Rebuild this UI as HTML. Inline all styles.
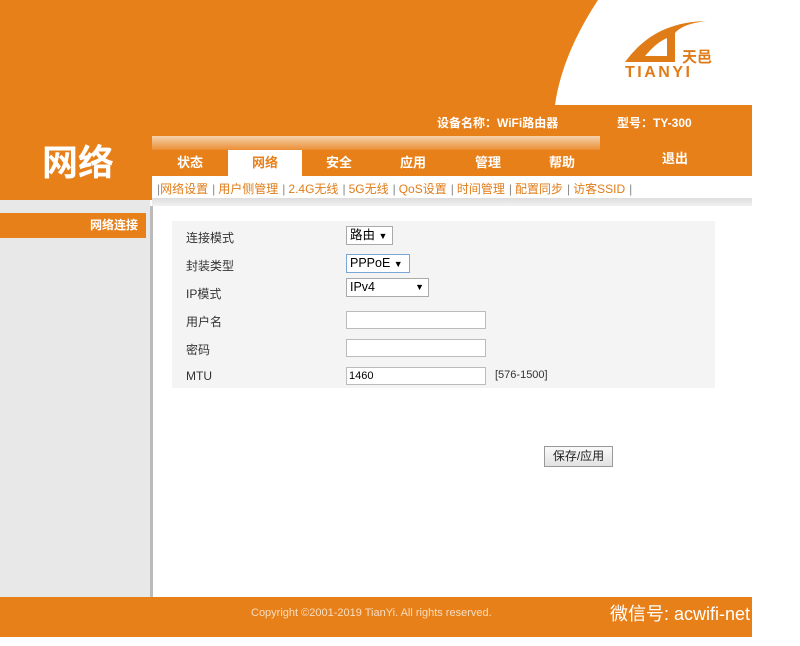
<!DOCTYPE html>
<html><head><meta charset="utf-8"><style>
body{margin:0;width:800px;height:646px;background:#fff;position:relative;overflow:hidden;font-family:"Liberation Sans","Noto Sans CJK SC",sans-serif;}
.a{position:absolute;}
.or{background:#e8801a;}
.w{color:#fff;}
.lbl{position:absolute;left:186px;font-size:12px;color:#333;}
.inp{position:absolute;left:346px;width:136px;height:16px;border:1px solid #bbb;background:#fff;font-size:11px;line-height:16px;padding-left:2px;box-sizing:content-box;}
.sel{position:absolute;left:346px;border:1px solid #aaa;background:#fff;font-size:12.5px;height:17px;line-height:17px;padding-left:3px;}
.tab{position:absolute;top:150px;width:74px;height:26px;line-height:26px;text-align:center;color:#fff;font-size:13px;font-weight:bold;}
.s{color:#888;margin:0 3px 0 4px;}
</style></head><body>
<svg class="a" style="left:0;top:0" width="800" height="110">
<path d="M0 0 H598 C575 35 560 70 555 105 H0 Z" fill="#e8801a"/>
<path d="M625 62 C645 35 670 22 706 21 C690 23 680 27 675 33 V62 Z" fill="#e07c18"/>
<path d="M645 56 C652 48 658 42 667 38 V56 Z" fill="#fff"/>
<circle cx="588" cy="612" r="6" fill="#fff"/><circle cx="596" cy="616" r="5" fill="#fff"/>
</svg>
<div class="a" style="left:682px;top:46px;font-size:15px;color:#e07c18;font-weight:bold;">天邑</div>
<div class="a" style="left:625px;top:64px;font-size:16px;color:#e07c18;font-weight:bold;letter-spacing:2.5px;">TIANYI</div>
<div class="a or" style="left:0;top:105px;width:752px;height:71px;"></div>
<div class="a or" style="left:0;top:176px;width:152px;height:24px;"></div>
<div class="a w" style="left:42px;top:134px;font-size:36px;font-weight:bold;">网络</div>
<div class="a w" style="left:437px;top:114px;font-size:12px;font-weight:bold;">设备名称：WiFi路由器</div>
<div class="a w" style="left:617px;top:114px;font-size:12px;font-weight:bold;">型号：TY-300</div>
<div class="a" style="left:152px;top:136px;width:448px;height:14px;background:linear-gradient(#f5d2ad,#eb8e33);"></div>
<div class="tab" style="left:153px">状态</div>
<div class="tab" style="left:228px;background:#fff;color:#e8801a;">网络</div>
<div class="tab" style="left:302px">安全</div>
<div class="tab" style="left:376px">应用</div>
<div class="tab" style="left:451px">管理</div>
<div class="tab" style="left:525px">帮助</div>
<div class="a w" style="left:662px;top:148px;font-size:13px;font-weight:bold;">退出</div>
<div class="a" style="left:157px;top:180px;font-size:12px;color:#e07c18;white-space:nowrap;"><span style="color:#888">|</span>网络设置<span class="s">|</span>用户侧管理<span class="s">|</span>2.4G无线<span class="s">|</span>5G无线<span class="s">|</span>QoS设置<span class="s">|</span>时间管理<span class="s">|</span>配置同步<span class="s">|</span>访客SSID<span class="s">|</span></div>
<div class="a" style="left:152px;top:198px;width:600px;height:8px;background:linear-gradient(#ddd,#f2f2f2);"></div>
<div class="a" style="left:0;top:200px;width:150px;height:397px;background:#e8e8e8;"></div>
<div class="a" style="left:150px;top:206px;width:3px;height:391px;background:#bbb;"></div>
<div class="a or w" style="left:0;top:213px;width:146px;height:25px;line-height:25px;text-align:right;font-size:12px;font-weight:bold;"><span style="padding-right:8px">网络连接</span></div>
<div class="a" style="left:172px;top:221px;width:543px;height:167px;background:#f4f4f4;"></div>
<div class="lbl" style="top:229px">连接模式</div>
<div class="lbl" style="top:257px">封装类型</div>
<div class="lbl" style="top:285px">IP模式</div>
<div class="lbl" style="top:313px">用户名</div>
<div class="lbl" style="top:341px">密码</div>
<div class="lbl" style="top:369px">MTU</div>
<div class="sel" style="top:226px;width:42px;">路由 <span style="font-size:9px">▼</span></div>
<div class="sel" style="top:254px;width:59px;border-color:#7aa7d8;">PPPoE <span style="font-size:9px">▼</span></div>
<div class="sel" style="top:278px;width:78px;">IPv4<span style="float:right;font-size:9px;padding-right:4px">▼</span></div>
<div class="inp" style="top:311px"></div>
<div class="inp" style="top:339px"></div>
<div class="inp" style="top:367px">1460</div>
<div class="a" style="left:495px;top:369px;font-size:11px;color:#333;">[576-1500]</div>
<div class="a" style="left:544px;top:446px;width:67px;height:19px;border:1px solid #999;background:linear-gradient(#fafafa,#e2e2e2);font-size:12px;line-height:19px;text-align:center;color:#222;">保存/应用</div>
<div class="a or" style="left:0;top:597px;width:752px;height:40px;"></div>
<div class="a" style="left:251px;top:607px;font-size:11px;color:#f7dcc0;">Copyright ©2001-2019 TianYi. All rights reserved.</div>
<div class="a" style="left:610px;top:600px;font-size:18px;color:#fff;">微信号: acwifi-net</div>
</body></html>
